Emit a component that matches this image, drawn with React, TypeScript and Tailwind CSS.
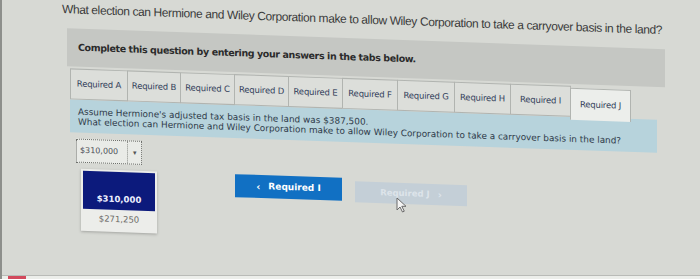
import React from 'react';

const tabs = [
  { id: 'A', w: 'w-[58px]' },
  { id: 'B', w: 'w-[54px]' },
  { id: 'C', w: 'w-[55px]' },
  { id: 'D', w: 'w-[55px]' },
  { id: 'E', w: 'w-[55px]' },
  { id: 'F', w: 'w-[56px]' },
  { id: 'G', w: 'w-[58px]' },
  { id: 'H', w: 'w-[57px]' },
  { id: 'I', w: 'w-[61px]' },
  { id: 'J', w: 'w-[61px]' }
];

function Cursor() {
  return (
    <svg className="absolute left-[394px] top-[197px]" width="11" height="16" viewBox="0 0 11 16">
      <path d="M1 1 L1 13 L4 10 L6.5 15 L8.3 14.2 L5.8 9.3 L10 9.3 Z" fill="#f4f4f4" stroke="#6a6a6a" strokeWidth="1" strokeLinejoin="round" />
    </svg>);

}

export default function App() {
  return (
    <div className="relative w-[700px] h-[279px] overflow-hidden bg-[#d7d9d4] border-l-2 border-[#8d8f8b] flex flex-col font-['Liberation_Sans',sans-serif]">
      <div className="flex-1 origin-top-left skew-y-[2deg]">
        <p className="pl-[60px] text-[12px] leading-[14px] tracking-[-0.4px] text-[#3b3b3b] whitespace-nowrap">
          What election can Hermione and Wiley Corporation make to allow Wiley Corporation to take a carryover basis in the land?
        </p>

        <div className="ml-[65px] mt-[12px] w-[598px] h-[38px] bg-[#c5c7c3] flex items-center pl-[11px]">
          <span className="font-['DejaVu_Sans',sans-serif] font-bold text-[9.5px] tracking-[-0.4px] text-[#2b2b2b]">
            Complete this question by entering your answers in the tabs below.
          </span>
        </div>

        <div className="ml-[68px] mt-[2px] w-[587px]">
          <div className="flex h-[31px]">
            {tabs.map((t) => {
              const active = t.id === 'J';
              return (
                <div
                  key={t.id}
                  className={`${t.w} flex items-center justify-center border border-[#b1b4b0] -ml-px first:ml-0 font-['DejaVu_Sans',sans-serif] text-[8.5px] tracking-[-0.2px] text-[#33415a] ${active ? 'bg-[#eceeeb] border-b-0 h-[32px] mt-[2px]' : 'bg-[#dcdeda]'}`}>
                  Required {t.id}
                </div>);

            })}
          </div>
          <div className="bg-[#b7d3dc] h-[33px] pl-[8px] pt-[7px] font-['DejaVu_Sans',sans-serif] text-[8.9px] leading-[10px] text-[#2f3b4a] whitespace-nowrap">
            <p>Assume Hermione&apos;s adjusted tax basis in the land was $387,500.</p>
            <p>What election can Hermione and Wiley Corporation make to allow Wiley Corporation to take a carryover basis in the land?</p>
          </div>
        </div>

        <div className="ml-[74px] mt-[6px] flex">
          <div className="w-[81px]">
            <div className="w-[66px] h-[24px] border border-dotted border-[#6f716d] bg-[#e9ebe7] flex">
              <span className="flex-1 flex items-center pl-[3px] font-['DejaVu_Sans',sans-serif] text-[8px] text-[#4a4d55]">$310,000</span>
              <span className="w-[14px] border-l border-dotted border-[#8a8c88] flex items-center justify-center text-[7px] text-[#555]">▾</span>
            </div>
            <div className="ml-[5px] mt-[6px] w-[76px] bg-[#ecedea] shadow-[0_1px_3px_rgba(0,0,0,0.25)] pt-[2px] pb-[4px]">
              <div className="mx-[2px] h-[38px] bg-[#0c1a7c] flex items-end justify-center pb-[4px] font-['DejaVu_Sans',sans-serif] font-bold text-[8.5px] text-[#eef0ff]">
                $310,000
              </div>
              <div className="h-[18px] flex items-center justify-center font-['DejaVu_Sans',sans-serif] text-[8.5px] text-[#6b6a66]">
                $271,250
              </div>
            </div>
          </div>

          <div className="ml-[78px] mt-[30px] flex items-start">
            <div className="w-[107px] h-[23px] bg-[#1170c3] flex items-center justify-center gap-[8px] font-['DejaVu_Sans',sans-serif] font-bold text-[9px] text-white">
              <span className="text-[10px]">‹</span>
              <span>Required I</span>
            </div>
            <div className="ml-[13px] mt-[3px] w-[112px] h-[21px] bg-[#c4cfd7] flex items-center justify-center gap-[8px] font-['DejaVu_Sans',sans-serif] font-bold text-[8.5px] text-[#dde4ea]">
              <span>Required J</span>
              <span className="text-[10px]">›</span>
            </div>
          </div>
        </div>
      </div>

      <div className="h-[4px] bg-[#eceeea] border-t border-[#b9bbb7] flex">
        <div className="ml-[6px] w-[18px] bg-[#d2495c]" />
      </div>

      <Cursor />
    </div>);

}
